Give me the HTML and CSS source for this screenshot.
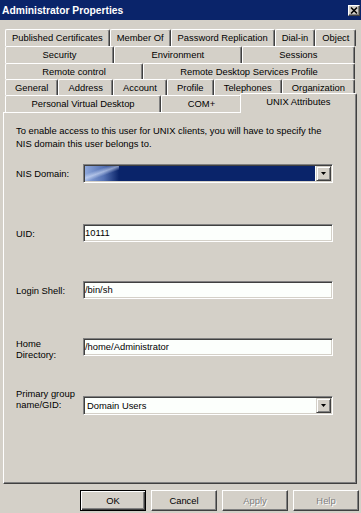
FILE: index.html
```html
<!DOCTYPE html>
<html>
<head>
<meta charset="utf-8">
<title>Administrator Properties</title>
<link rel="stylesheet" href="styles.css">
</head>
<body>
<div class="window">
  <div class="titlebar">
    <span class="title">Administrator Properties</span>
    <span class="close"><svg width="10" height="9" viewBox="0 0 10 9"><path d="M2 1.5 L8 7.5 M8 1.5 L2 7.5" stroke="#000" stroke-width="1.6" fill="none"/></svg></span>
  </div>
  <div class="body">
    <div class="tabs">
      <div class="tab-row tall">
        <div class="tab">Published Certificates</div>
        <div class="tab">Member Of</div>
        <div class="tab">Password Replication</div>
        <div class="tab">Dial-in</div>
        <div class="tab">Object</div>
      </div>
      <div class="tab-row tall">
        <div class="tab">Security</div>
        <div class="tab">Environment</div>
        <div class="tab">Sessions</div>
      </div>
      <div class="tab-row short">
        <div class="tab">Remote control</div>
        <div class="tab">Remote Desktop Services Profile</div>
      </div>
      <div class="tab-row short">
        <div class="tab">General</div>
        <div class="tab">Address</div>
        <div class="tab">Account</div>
        <div class="tab">Profile</div>
        <div class="tab">Telephones</div>
        <div class="tab">Organization</div>
      </div>
      <div class="tab-row tall front">
        <div class="tab">Personal Virtual Desktop</div>
        <div class="tab">COM+</div>
        <div class="tab active">UNIX Attributes</div>
      </div>
    </div>
    <div class="panel">
      <p class="intro">To enable access to this user for UNIX clients, you will have to specify the NIS domain this user belongs to.</p>
      <div class="row single nis">
        <span class="label">NIS Domain:</span>
        <div class="combo selected">
          <span class="value"><span class="smear"></span></span>
          <span class="drop"><svg width="5" height="3" viewBox="0 0 5 3"><path d="M0 0 H5 L2.5 3 Z" fill="#000"/></svg></span>
        </div>
      </div>
      <div class="row single uid">
        <span class="label">UID:</span>
        <div class="field">10111</div>
      </div>
      <div class="row single shell">
        <span class="label">Login Shell:</span>
        <div class="field">/bin/sh</div>
      </div>
      <div class="row double home">
        <span class="label">Home<br>Directory:</span>
        <div class="field">/home/Administrator</div>
      </div>
      <div class="row double group">
        <span class="label">Primary group<br>name/GID:</span>
        <div class="combo">
          <span class="value">Domain Users</span>
          <span class="drop"><svg width="5" height="3" viewBox="0 0 5 3"><path d="M0 0 H5 L2.5 3 Z" fill="#000"/></svg></span>
        </div>
      </div>
    </div>
    <div class="buttons">
      <button class="btn default">OK</button>
      <button class="btn">Cancel</button>
      <button class="btn disabled">Apply</button>
      <button class="btn disabled">Help</button>
    </div>
  </div>
</div>
</body>
</html>
```
FILE: styles.css
```css
html, body {
  margin: 0;
  padding: 0;
}
body {
  width: 361px;
  height: 513px;
  overflow: hidden;
  background: #d4d0c8;
  font-family: "Liberation Sans", Arial, sans-serif;
  font-size: 9.4px;
  color: #000;
}
.window {
  width: 361px;
}
.titlebar {
  height: 20px;
  background: #0a246a;
  display: flex;
  align-items: center;
  justify-content: space-between;
  padding: 0 1px 0 2px;
  box-sizing: border-box;
}
.title {
  color: #fff;
  font-weight: bold;
  font-size: 10.3px;
  margin-top: 1px;
}
.close {
  width: 12px;
  height: 11px;
  box-sizing: border-box;
  background: #d4d0c8;
  border: 1px solid;
  border-color: #fff #404040 #404040 #fff;
  box-shadow: inset -1px -1px #808080;
  display: flex;
  align-items: center;
  justify-content: center;
  margin-top: 1px;
}
.close svg {
  display: block;
}
.body {
  padding: 9px 4px 0 3px;
}
.tabs {
  margin: 0 2px;
}
.tab-row {
  display: flex;
}
.tab-row.tall {
  height: 17px;
}
.tab-row.short {
  height: 16px;
}
.tab {
  flex: 1 1 auto;
  box-sizing: border-box;
  padding: 0 6px;
  text-align: center;
  white-space: nowrap;
  border-top: 1px solid #fff;
  border-left: 1px solid #fff;
  border-right: 1px solid #404040;
  box-shadow: inset -1px 0 #808080;
  border-radius: 2px 2px 0 0;
  background: #d4d0c8;
}
.tab-row.tall .tab {
  line-height: 16px;
}
.tab-row.short .tab {
  line-height: 15px;
}
.tab-row.front .tab.active {
  position: relative;
  z-index: 2;
  align-self: flex-start;
  margin: -2px -2px 0 -2px;
  height: 20px;
  line-height: 16px;
  padding-bottom: 3px;
}
.panel {
  height: 372px;
  box-sizing: border-box;
  border: 1px solid;
  border-color: #fff #404040 #404040 #fff;
  box-shadow: inset -1px -1px #808080;
  padding: 0 12px;
  display: flex;
  flex-direction: column;
}
.intro {
  margin: 11px 0 0 0;
  line-height: 13px;
  width: 316px;
}
.row {
  display: flex;
}
.row.single {
  align-items: center;
}
.row.double {
  align-items: flex-start;
}
.label {
  width: 67px;
  flex: none;
  line-height: 11px;
}
.nis { margin-top: 14px; }
.uid { margin-top: 41px; }
.shell { margin-top: 39px; }
.home { margin-top: 39px; }
.group { margin-top: 28px; }
.group .combo { margin-top: 8px; }
.field {
  width: 250px;
  height: 18px;
  box-sizing: border-box;
  border: 1px solid;
  border-color: #808080 #fff #fff #808080;
  box-shadow: inset 1px 1px #404040, inset -1px -1px #d4d0c8;
  background: #fcfffc;
  padding: 0 2px 0 1px;
  line-height: 16px;
  white-space: nowrap;
}
.combo {
  width: 250px;
  height: 19px;
  box-sizing: border-box;
  border: 1px solid;
  border-color: #808080 #fff #fff #808080;
  box-shadow: inset 1px 1px #404040, inset -1px -1px #d4d0c8;
  background: #fcfffc;
  padding: 1px;
  display: flex;
}
.combo .value {
  flex: 1 1 auto;
  line-height: 15px;
  padding-left: 2px;
  white-space: nowrap;
  position: relative;
  overflow: hidden;
}
.combo.selected .value {
  background: #0a246a;
  margin-right: 1px;
}
.smear {
  position: absolute;
  left: 0;
  top: 0;
  width: 34px;
  height: 15px;
  background:
    linear-gradient(160deg, transparent 30%, rgba(225,235,255,0.55) 45%, transparent 60%),
    linear-gradient(90deg, rgba(150,175,225,0.95), rgba(110,140,205,0.75) 55%, rgba(10,36,106,0) 100%);
}
.drop {
  width: 15px;
  flex: none;
  box-sizing: border-box;
  background: #d4d0c8;
  border: 1px solid;
  border-color: #d4d0c8 #404040 #404040 #d4d0c8;
  box-shadow: inset 1px 1px #fff, inset -1px -1px #808080;
  display: flex;
  align-items: center;
  justify-content: center;
}
.drop svg {
  display: block;
}
.buttons {
  display: flex;
  justify-content: flex-end;
  gap: 5px;
  margin: 6px -2px 0 0;
}
.btn {
  width: 66px;
  height: 21px;
  box-sizing: border-box;
  background: #d4d0c8;
  border: 1px solid;
  border-color: #fff #404040 #404040 #fff;
  box-shadow: inset -1px -1px #808080;
  font-family: "Liberation Sans", Arial, sans-serif;
  font-size: 9.4px;
  color: #000;
  padding: 0;
  margin: 0;
}
.btn.default {
  border: 1px solid #000;
  box-shadow: inset 1px 1px #fff, inset -1px -1px #404040, inset -2px -2px #808080;
}
.btn.disabled {
  color: #808080;
  text-shadow: 1px 1px #fff;
}
```
